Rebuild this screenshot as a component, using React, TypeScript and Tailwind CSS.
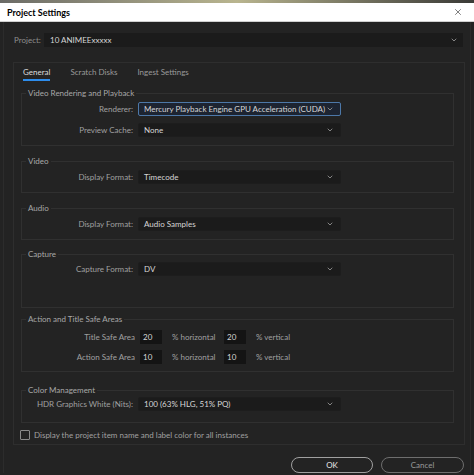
import { ChevronDown, X } from 'lucide-react'
import type { ReactNode } from 'react'

const font = { fontFamily: 'Lato, "Open Sans", "Liberation Sans", sans-serif' }

function Select({ value, active }: { value: string; active?: boolean }) {
  return (
    <div
      className={
        'flex items-center justify-between w-[203px] h-[14px] pl-[5px] pr-[6px] rounded-[2px] border ' +
        (active ? 'border-[#4d78a8] bg-[#1d2431]' : 'border-[#1d1d1d] bg-[#1b1b1b]')
      }
    >
      <span className="text-[8px] leading-none whitespace-nowrap text-[#d6d6d6]">{value}</span>
      <ChevronDown size={8} strokeWidth={2.5} className="text-[#9a9a9a] shrink-0" />
    </div>
  )
}

function Row({ label, children }: { label: string; children: ReactNode }) {
  return (
    <div className="flex items-center">
      <span className="w-[116px] pr-[5px] text-right text-[8px] leading-none whitespace-nowrap text-[#a0a0a0]">{label}</span>
      {children}
    </div>
  )
}

function Section({ title, className, children }: { title: string; className?: string; children: ReactNode }) {
  return (
    <fieldset className={'border border-[#303030] ' + (className ?? '')}>
      <legend className="ml-[4px] px-[2px] text-[8px] leading-[10px] text-[#a8a8a8]">{title}</legend>
      {children}
    </fieldset>
  )
}

function NumBox({ v }: { v: string }) {
  return (
    <div className="w-[22px] h-[14px] bg-[#141414] pl-[3px] flex items-center text-[8px] leading-none text-[#d6d6d6]">
      {v}
    </div>
  )
}

export default function App() {
  return (
    <div className="w-[474px] h-[475px] bg-[#232323] flex flex-col overflow-hidden" style={font}>
      {/* strip of the window behind */}
      <div className="h-[3px] shrink-0 bg-gradient-to-r from-[#6b6b66] via-[#b9b58f] to-[#3a3a36]" />

      {/* title bar */}
      <div className="h-[19px] shrink-0 bg-white flex items-center justify-between pl-[7px] pr-[11px] border-b border-[#d0d0d0]">
        <span className="text-[9px] font-bold text-black leading-none">Project Settings</span>
        <X size={10} strokeWidth={1.5} className="text-[#333]" />
      </div>

      <div className="flex flex-col border-x border-[#2c2c2c] mx-[3px] shrink-0">
        {/* project row */}
        <div className="flex items-center mt-[11px] pl-[10px] pr-[7px]">
          <span className="text-[8px] leading-none text-[#8e8e8e] w-[30px]">Project:</span>
          <div className="flex-1 flex items-center justify-between h-[14px] bg-[#1b1b1b] pl-[6px] pr-[5px]">
            <span className="text-[8px] leading-none text-[#d6d6d6]">10 ANIMEExxxxx</span>
            <ChevronDown size={8} strokeWidth={2.5} className="text-[#9a9a9a]" />
          </div>
        </div>

        {/* tab panel */}
        <div className="mt-[15px] ml-[9px] mr-[5px] border border-[#2e2e2e] pl-[7px] pr-[10px] pb-[4px] flex flex-col">
          <div className="flex gap-[20px] pl-[2px] pt-[5px] h-[25px] text-[8px] leading-none">
            <div className="flex flex-col items-start">
              <span className="text-[#dcdcdc]">General</span>
              <div className="mt-[3px] h-[1.5px] w-full bg-[#2d8ceb]" />
            </div>
            <span className="text-[#9a9a9a]">Scratch Disks</span>
            <span className="text-[#9a9a9a]">Ingest Settings</span>
          </div>

          <Section title="Video Rendering and Playback" className="pb-[8px]">
            <div className="flex flex-col gap-[7px] mt-[4px]">
              <Row label="Renderer:">
                <Select value="Mercury Playback Engine GPU Acceleration (CUDA)" active />
              </Row>
              <Row label="Preview Cache:">
                <Select value="None" />
              </Row>
            </div>
          </Section>

          <Section title="Video" className="mt-[10px] pb-[8px]">
            <div className="mt-[4px]">
              <Row label="Display Format:">
                <Select value="Timecode" />
              </Row>
            </div>
          </Section>

          <Section title="Audio" className="mt-[10px] pb-[8px]">
            <div className="mt-[4px]">
              <Row label="Display Format:">
                <Select value="Audio Samples" />
              </Row>
            </div>
          </Section>

          <Section title="Capture" className="mt-[9px] pb-[31px]">
            <div className="mt-[3px]">
              <Row label="Capture Format:">
                <Select value="DV" />
              </Row>
            </div>
          </Section>

          <Section title="Action and Title Safe Areas" className="mt-[6px] pb-[7px]">
            <div className="flex flex-col gap-[6px] mt-[6px] text-[8px] leading-none text-[#a0a0a0]">
              {[
                ['Title Safe Area', '20', '20'],
                ['Action Safe Area', '10', '10'],
              ].map(([label, h, v]) => (
                <div key={label} className="flex items-center">
                  <span className="w-[118px] pr-[5px] text-right">{label}</span>
                  <NumBox v={h} />
                  <span className="ml-[10px] w-[52px]">% horizontal</span>
                  <NumBox v={v} />
                  <span className="ml-[10px]">% vertical</span>
                </div>
              ))}
            </div>
          </Section>

          <Section title="Color Management" className="mt-[13px] pb-[11px]">
            <div className="mt-[2px]">
              <Row label="HDR Graphics White (Nits):">
                <Select value="100 (63% HLG, 51% PQ)" />
              </Row>
            </div>
          </Section>

          <div className="flex items-center gap-[4px] mt-[7px] h-[10px] -ml-[1px]">
            <div className="w-[10px] h-[10px] border border-[#8a8a8a] rounded-[1px]" />
            <span className="text-[8px] leading-none whitespace-nowrap text-[#a0a0a0]">
              Display the project item name and label color for all instances
            </span>
          </div>
        </div>

        {/* buttons */}
        <div className="flex justify-end gap-[8px] mt-[12px] pr-[6px]">
          <button className="w-[82px] h-[16px] rounded-full border-[1.5px] border-[#a0a0a0] text-[8px] leading-none text-[#e6e6e6]">
            OK
          </button>
          <button className="w-[83px] h-[16px] rounded-full border-[1.5px] border-[#6e6e6e] text-[8px] leading-none text-[#9a9a9a]">
            Cancel
          </button>
        </div>
      </div>
    </div>
  )
}
